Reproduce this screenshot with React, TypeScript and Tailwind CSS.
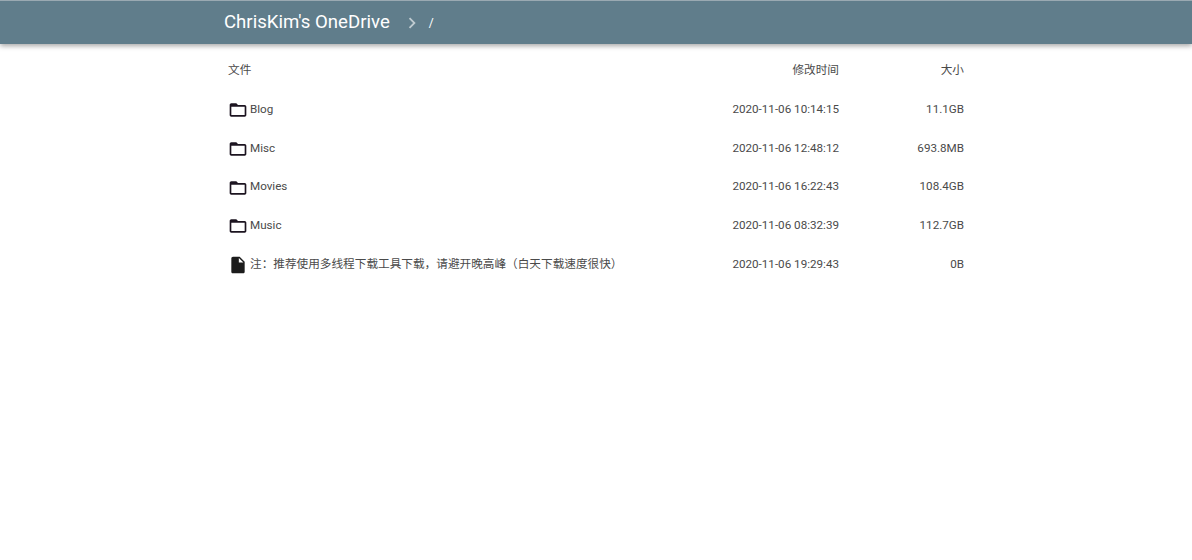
type Row = {
  name: string;
  time: string;
  size: string;
  kind: "folder" | "file";
};

const rows: Row[] = [
  { name: "Blog", time: "2020-11-06 10:14:15", size: "11.1GB", kind: "folder" },
  { name: "Misc", time: "2020-11-06 12:48:12", size: "693.8MB", kind: "folder" },
  { name: "Movies", time: "2020-11-06 16:22:43", size: "108.4GB", kind: "folder" },
  { name: "Music", time: "2020-11-06 08:32:39", size: "112.7GB", kind: "folder" },
  {
    name: "注：推荐使用多线程下载工具下载，请避开晚高峰（白天下载速度很快）",
    time: "2020-11-06 19:29:43",
    size: "0B",
    kind: "file",
  },
];

function FolderIcon() {
  return (
    <svg viewBox="0 0 24 24" className="h-[20px] w-[20px] shrink-0 fill-[#1c1420]" aria-hidden="true">
      <path d="M20 6h-8l-2-2H4c-1.1 0-1.99.9-1.99 2L2 18c0 1.1.9 2 2 2h16c1.1 0 2-.9 2-2V8c0-1.1-.9-2-2-2zm0 12H4V8h16v10z" />
    </svg>
  );
}

function FileIcon() {
  return (
    <svg viewBox="0 0 24 24" className="h-[20px] w-[20px] shrink-0 fill-[#1c1c1c]" aria-hidden="true">
      <path d="M6 2c-1.1 0-1.99.9-1.99 2L4 20c0 1.1.89 2 1.99 2H18c1.1 0 2-.9 2-2V8l-6-6H6zm7 7V3.5L18.5 9H13z" />
    </svg>
  );
}

export default function App() {
  return (
    <div className="min-h-[560px] bg-white font-['Roboto','Noto_Sans_CJK_SC',sans-serif] text-[11.65px] text-[#4a4a4a]">
      <header className="h-[44px] border-t border-[#9aa9b2] bg-[#607d8b] shadow-[0_2px_5px_rgba(0,0,0,0.35)]">
        <div className="mx-auto flex h-full w-[744px] items-center text-white">
          <span className="text-[18.6px] leading-none">ChrisKim's OneDrive</span>
          <svg viewBox="0 0 24 24" className="ml-[11px] h-[22px] w-[22px] fill-white/60" aria-hidden="true">
            <path d="M10 6 8.59 7.41 13.17 12l-4.58 4.59L10 18l6-6z" />
          </svg>
          <span className="ml-[6px] text-[12px]">/</span>
        </div>
      </header>
      <main className="mx-auto w-[744px] pt-[7.3px]">
        <div className="flex h-[38.8px] items-center px-1">
          <span className="flex-1">文件</span>
          <span className="w-[160px] text-right">修改时间</span>
          <span className="w-[125px] text-right">大小</span>
        </div>
        {rows.map((row) => (
          <div key={row.name} className="flex h-[38.8px] items-center px-1">
            <div className="flex min-w-0 flex-1 items-center">
              <span className="-ml-[0.5px] mt-[1px]">{row.kind === "folder" ? <FolderIcon /> : <FileIcon />}</span>
              <span className="ml-[2.5px] whitespace-nowrap">{row.name}</span>
            </div>
            <span className="w-[160px] text-right">{row.time}</span>
            <span className="w-[125px] text-right">{row.size}</span>
          </div>
        ))}
      </main>
    </div>
  );
}
